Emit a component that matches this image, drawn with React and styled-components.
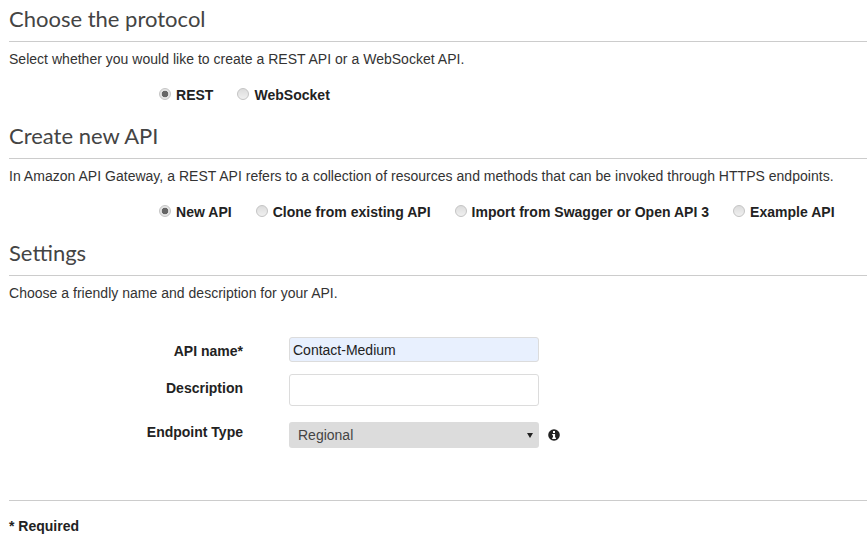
import React from "react"
import styled, { createGlobalStyle } from "styled-components"

const GlobalStyle = createGlobalStyle`
  html, body {
    margin: 0;
    background: #fff;
    overflow: hidden;
  }
  body {
    font-family: "Liberation Sans", Arial, sans-serif;
    font-size: 14px;
    color: #333;
  }
`

const Page = styled.div`
  padding: 5px 0 0 9px;
  width: 858px;
  height: 552px;
`

const Section = styled.section`
  height: 117px;
`

const Heading = styled.h2`
  margin: 0;
  height: 36px;
  line-height: 28px;
  font-family: Lato, sans-serif;
  font-size: 22px;
  font-weight: 400;
  color: #444;
  border-bottom: 1px solid #ccc;
`

const Description = styled.p`
  margin: 0;
  height: 32px;
  padding-top: 9px;
  box-sizing: border-box;
  line-height: 16px;
  letter-spacing: 0.02px;
`

const RadioRow = styled.div`
  display: flex;
  gap: 24px;
  margin: 12px 0 0 150px;
`

const RadioLabel = styled.label`
  display: flex;
  align-items: center;
  gap: 5px;
  height: 18px;
  font-weight: 700;
  letter-spacing: 0.022px;
  color: #222;
`

const Radio = styled.input.attrs({ type: "radio" })`
  appearance: none;
  width: 12px;
  height: 12px;
  margin: -3px 0 0;
  border-radius: 50%;
  border: 1px solid #c4c4c4;
  box-sizing: border-box;
  background: ${(p) =>
    p.defaultChecked
      ? "radial-gradient(circle, #666 0 3px, #e4e4e4 3.6px)"
      : "linear-gradient(#dcdcdc, #f0f0f0)"};
`

const Form = styled.div`
  margin-top: 29px;
`

const Row = styled.div`
  display: grid;
  grid-template-columns: 234px 250px auto;
  column-gap: 46px;
  margin-bottom: ${(p) => p.$gap}px;
`

const FieldLabel = styled.label`
  text-align: right;
  font-weight: 700;
  color: #222;
  line-height: 16px;
  padding-top: ${(p) => p.$top}px;
`

const TextInput = styled.input`
  width: 250px;
  height: ${(p) => p.$height}px;
  box-sizing: border-box;
  padding: 0 3px;
  border: 1px solid #dcdcdc;
  border-radius: 3px;
  background: ${(p) => (p.$filled ? "#e8f0fe" : "#fff")};
  font: 14px "Liberation Sans", Arial, sans-serif;
  color: #222;
  outline: none;
`

const SelectBox = styled.div`
  display: flex;
  align-items: center;
  justify-content: space-between;
  height: 26px;
  padding: 0 6px 0 9px;
  border-radius: 3px;
  background: #dcdcdc;
  color: #444;
`

const Caret = styled.span`
  width: 0;
  height: 0;
  border-left: 3px solid transparent;
  border-right: 3px solid transparent;
  border-top: 5px solid #222;
`

const InfoIcon = styled.svg`
  width: 12px;
  height: 12px;
  margin: 7px 0 0 -37px;
`

const Divider = styled.hr`
  margin: 52px 0 0;
  border: 0;
  border-top: 1px solid #ccc;
`

const Footnote = styled.div`
  margin-top: 17px;
  font-weight: 700;
  color: #222;
  line-height: 16px;
`

const protocols = [
  { label: "REST", checked: true },
  { label: "WebSocket" },
]

const apiOptions = [
  { label: "New API", checked: true },
  { label: "Clone from existing API" },
  { label: "Import from Swagger or Open API 3" },
  { label: "Example API" },
]

const RadioGroup = ({ name, options }) => (
  <RadioRow>
    {options.map((o) => (
      <RadioLabel key={o.label}>
        <Radio name={name} defaultChecked={o.checked} />
        {o.label}
      </RadioLabel>
    ))}
  </RadioRow>
)

const App = () => (
  <Page>
    <GlobalStyle />
    <Section>
      <Heading>Choose the protocol</Heading>
      <Description>Select whether you would like to create a REST API or a WebSocket API.</Description>
      <RadioGroup name="protocol" options={protocols} />
    </Section>
    <Section>
      <Heading>Create new API</Heading>
      <Description>
        In Amazon API Gateway, a REST API refers to a collection of resources and methods that can be invoked through HTTPS endpoints.
      </Description>
      <RadioGroup name="kind" options={apiOptions} />
    </Section>
    <Heading>Settings</Heading>
    <Description>Choose a friendly name and description for your API.</Description>
    <Form>
      <Row $gap={12}>
        <FieldLabel $top={6}>API name*</FieldLabel>
        <TextInput $height={25} $filled defaultValue="Contact-Medium" />
      </Row>
      <Row $gap={16}>
        <FieldLabel $top={6}>Description</FieldLabel>
        <TextInput $height={32} />
      </Row>
      <Row $gap={0}>
        <FieldLabel $top={2}>Endpoint Type</FieldLabel>
        <SelectBox>
          Regional
          <Caret />
        </SelectBox>
        <InfoIcon viewBox="0 0 12 12">
          <circle cx="6" cy="6" r="5.8" fill="#222" />
          <rect x="5" y="2" width="2" height="2" fill="#fff" />
          <path d="M4.2 5h2.9v3.6h.8V10H4.2V8.6H5V6.3h-.8z" fill="#fff" />
        </InfoIcon>
      </Row>
    </Form>
    <Divider />
    <Footnote>* Required</Footnote>
  </Page>
)

export default App
